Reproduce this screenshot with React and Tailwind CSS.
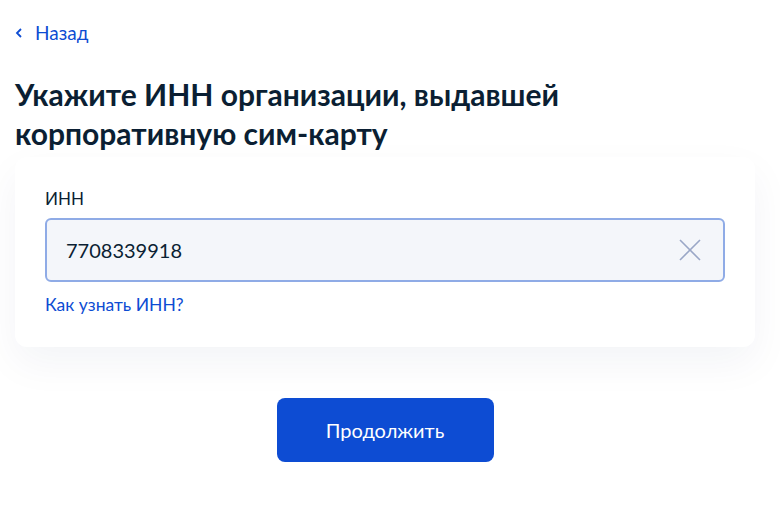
import React from "react";

const App = () => (
  <div className="min-h-[529px] bg-white pl-[15px] pr-[25px] font-['Lato','Noto_Sans',sans-serif] text-[#0b1f33]">
    {/* Back link */}
    <a href="#" className="flex h-[66px] items-center gap-[12px] text-[19px] text-[#0d4cd3]">
      <svg width="8" height="10" viewBox="0 0 8 10" fill="none">
        <path d="M6 1L2 5l4 4" stroke="#0d4cd3" strokeWidth="1.8" />
      </svg>
      <span>Назад</span>
    </a>

    {/* Title */}
    <h1 className="mt-[9px] text-[30px] font-bold leading-[39px]">
      Укажите ИНН организации, выдавшей
      <br />
      корпоративную сим-карту
    </h1>

    {/* Card */}
    <div className="mt-[4px] rounded-xl bg-white px-[30px] pt-[30px] pb-[31px] shadow-[0_16px_40px_rgba(16,40,100,0.05)]">
      <div className="text-[17px] leading-[24px]">ИНН</div>
      <div className="mt-[7px] flex h-[64px] items-center justify-between rounded-md border-2 border-[#8fabe6] bg-[#f4f6fa] pl-[19px] pr-[22px]">
        <span className="text-[20px]">7708339918</span>
        <svg width="22" height="22" viewBox="0 0 22 22" fill="none">
          <path d="M1 1l20 20M21 1L1 21" stroke="#9aa7c7" strokeWidth="1.6" />
        </svg>
      </div>
      <a href="#" className="mt-[12px] block text-[17.5px] leading-[22px] text-[#0d4cd3]">
        Как узнать ИНН?
      </a>
    </div>

    {/* Submit */}
    <div className="mt-[51px] flex justify-center">
      <button className="h-[64px] w-[217px] rounded-lg bg-[#0d4cd3] text-[20px] text-white">
        Продолжить
      </button>
    </div>
  </div>
);

export default App;
